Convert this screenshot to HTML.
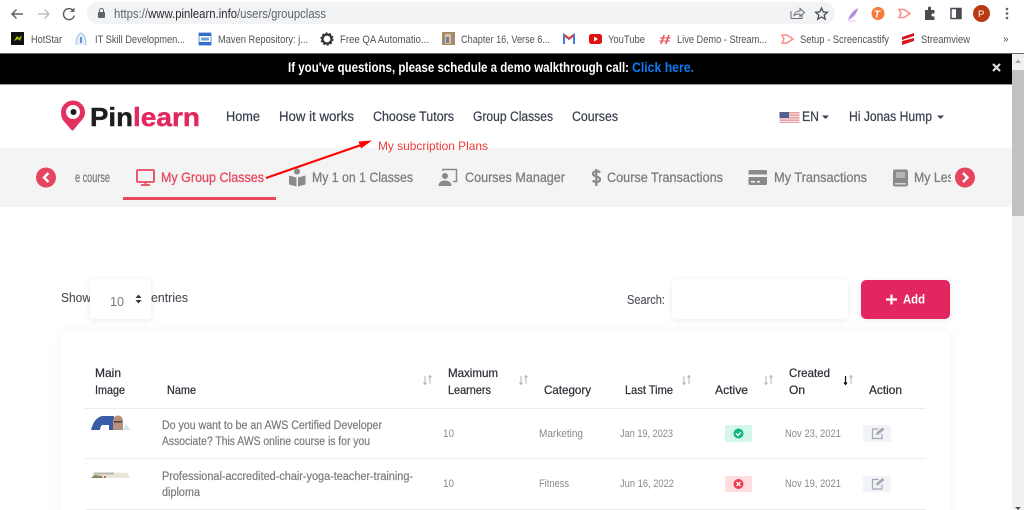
<!DOCTYPE html>
<html><head><meta charset="utf-8"><title>Pinlearn</title>
<style>
html,body{margin:0;padding:0;background:#fff;width:1024px;height:510px;overflow:hidden}
svg{display:block;filter:blur(.35px)}
text{font-family:"Liberation Sans",sans-serif}
.bm{font-size:11px;fill:#4f5257}
.nav{font-size:13.5px;fill:#3b4050;stroke:#3b4050;stroke-width:.22px}
.tab{font-size:14px;fill:#7d7d7d;stroke:#7d7d7d;stroke-width:.28px}
.th{font-size:12px;fill:#2e3138;stroke:#2e3138;stroke-width:.25px}
.td{font-size:11px;fill:#8a8a8a}
.tn{font-size:11.5px;fill:#7c7c7c;stroke:#7c7c7c;stroke-width:.22px}
.lb{font-size:13px;fill:#4a4d55;stroke:#4a4d55;stroke-width:.12px}
</style></head><body>
<svg width="1024" height="510" viewBox="0 0 1024 510" xmlns="http://www.w3.org/2000/svg">
<defs>
<filter id="sh" x="-20%" y="-20%" width="140%" height="150%"><feDropShadow dx="0" dy="1" stdDeviation="3" flood-color="#000" flood-opacity=".09"/></filter>
<filter id="sh2" x="-5%" y="-5%" width="110%" height="110%"><feDropShadow dx="0" dy="0" stdDeviation="5" flood-color="#000" flood-opacity=".05"/></filter>
<clipPath id="r"><rect x="900" y="165" width="51" height="25"/></clipPath>
</defs>

<!-- browser toolbar -->
<rect width="1024" height="54" fill="#fff"/>
<rect x="87" y="2" width="748" height="22" rx="11" fill="#f1f3f4"/>
<path d="M23 14H12M16.500 9.500L12 14l4.500 4.500" fill="none" stroke="#5f6368" stroke-width="1.500"/>
<path d="M49 14H38M44.500 9.500L49 14l-4.500 4.500" fill="none" stroke="#bdc1c6" stroke-width="1.500"/>
<path d="M73.500 11a5.500 5.500 0 1 0 .8 4.500" fill="none" stroke="#5f6368" stroke-width="1.500"/><path d="M74.500 7.500v4.500h-4.500z" fill="#5f6368"/>
<rect x="98" y="12" width="7" height="6" rx="1" fill="#5f6368"/><path d="M99.500 12v-1.500a2 2 0 0 1 4 0V12" fill="none" stroke="#5f6368" stroke-width="1"/>
<text x="114" y="18" font-size="12.500" fill="#5f6368" textLength="212" lengthAdjust="spacingAndGlyphs">https://<tspan fill="#2a2c30">www.pinlearn.info</tspan>/users/groupclass</text>
<path d="M791 11v7.500h11V15M794 15.500c.5-3 3-4.500 6-4.500V8.500l4.500 4-4.500 4V14c-2.500 0-4.500.3-6 1.500z" fill="none" stroke="#6a6d72" stroke-width="1"/>
<path d="M821.500 8l1.700 3.900 4.200.4-3.200 2.800 1 4.100-3.700-2.200-3.700 2.200 1-4.100-3.200-2.800 4.200-.4z" fill="none" stroke="#4a4d52" stroke-width="1.300"/>
<path d="M848 20c2-6 5-9 10-12-1 5-4 9-8 11z" fill="#b48ae0"/><path d="M848 21h8" stroke="#d9c6ef" stroke-width="1"/>
<circle cx="878" cy="13.500" r="6.500" fill="#f47b3a"/><text x="874" y="17.500" font-size="10" font-weight="bold" font-style="italic" fill="#fff">T</text>
<path d="M899 9.500h5l6 4-6 4h-5l2-4z" fill="none" stroke="#f88" stroke-width="1.500"/>
<path d="M925 10h3v-2a1.500 1.500 0 0 1 3 0v2h3.500v3.500h-1.500a1.500 1.500 0 0 0 0 3h1.500V20H925z" fill="#4a4d52"/>
<rect x="951" y="8.500" width="10" height="10" fill="none" stroke="#4a4d52" stroke-width="1.500"/><rect x="956" y="8.500" width="5" height="10" fill="#4a4d52"/>
<circle cx="981.500" cy="13.500" r="8.500" fill="#b93a10"/><text x="978" y="17" font-size="9.500" fill="#fff">P</text>
<circle cx="1007" cy="9" r="1.300" fill="#5f6368"/><circle cx="1007" cy="13.500" r="1.300" fill="#5f6368"/><circle cx="1007" cy="18" r="1.300" fill="#5f6368"/>

<!-- bookmarks -->
<rect x="11" y="32" width="13" height="13" fill="#111"/><path d="M14 41l3-5 2 2 3-3-2 6-2-2z" fill="#9c0"/>
<text class="bm" x="31" y="43" textLength="31" lengthAdjust="spacingAndGlyphs">HotStar</text>
<path d="M76 45c0-6 2-11 5-12 3 1 5 6 5 12" fill="#e6eff9" stroke="#9cc0e6" stroke-width="1"/><path d="M81 37v6" stroke="#3a6fc0" stroke-width="1.500"/>
<text class="bm" x="95" y="43" textLength="90" lengthAdjust="spacingAndGlyphs">IT Skill Developmen...</text>
<rect x="199" y="33" width="12" height="12" fill="#fff" stroke="#3f78c9" stroke-width=".8"/><rect x="199" y="33" width="12" height="3" fill="#2f6fc9"/><rect x="199" y="42" width="12" height="3" fill="#2f6fc9"/><rect x="201" y="37.500" width="8" height="3" fill="#6fa0de"/>
<text class="bm" x="218" y="43" textLength="90" lengthAdjust="spacingAndGlyphs">Maven Repository: j...</text>
<circle cx="327" cy="39" r="4.500" fill="none" stroke="#333" stroke-width="2.200"/><circle cx="327" cy="39" r="6" fill="none" stroke="#333" stroke-width="1.200" stroke-dasharray="2 1.800"/>
<text class="bm" x="340" y="43" textLength="89" lengthAdjust="spacingAndGlyphs">Free QA Automatio...</text>
<rect x="442" y="32" width="13" height="13" fill="#a58a6c"/><rect x="445" y="34" width="6" height="10" fill="#d9c2a0"/><rect x="446" y="37" width="3" height="6" fill="#6f7fa8"/>
<text class="bm" x="461" y="43" textLength="89" lengthAdjust="spacingAndGlyphs">Chapter 16, Verse 6...</text>
<path d="M564 44v-9l5 4 5-4v9" fill="none" stroke="#3c7ce0" stroke-width="2"/><path d="M564.500 35l4.500 3.500 4.500-3.500" fill="none" stroke="#e04030" stroke-width="2"/>
<rect x="589" y="34" width="13" height="10" rx="2.500" fill="#e01010"/><path d="M594 36.500v5l4-2.500z" fill="#fff"/>
<text class="bm" x="608" y="43" textLength="37" lengthAdjust="spacingAndGlyphs">YouTube</text>
<text x="659" y="44" font-size="13" font-weight="bold" fill="#e8505a" textLength="12" lengthAdjust="spacingAndGlyphs">#</text>
<text class="bm" x="677" y="43" textLength="90" lengthAdjust="spacingAndGlyphs">Live Demo - Stream...</text>
<path d="M782 35h5l6 4-6 4h-5l2-4z" fill="none" stroke="#f88" stroke-width="1.400"/>
<text class="bm" x="800" y="43" textLength="89" lengthAdjust="spacingAndGlyphs">Setup - Screencastify</text>
<path d="M902 37l12-4v3l-12 4zM902 41l12-3v3l-12 4z" fill="#d8141c"/>
<text class="bm" x="921" y="43" textLength="49" lengthAdjust="spacingAndGlyphs">Streamview</text>
<text x="1003" y="42" font-size="10" fill="#4a4d52">»</text>
<rect y="53" width="1024" height="1.500" fill="#666"/>

<!-- page -->
<rect y="54" width="1012" height="30" fill="#000"/>
<rect y="84" width="1012" height="1" fill="#999"/>
<text x="288" y="72" font-size="14" font-weight="bold" fill="#fff" textLength="341" lengthAdjust="spacingAndGlyphs">If you've questions, please schedule a demo walkthrough call:</text>
<text x="632" y="72" font-size="14" font-weight="bold" fill="#0d7bf2" textLength="62" lengthAdjust="spacingAndGlyphs">Click here.</text>
<path d="M993 64l7 7M1000 64l-7 7" stroke="#ddd" stroke-width="2.200"/>

<!-- logo -->
<path d="M73 100.500a12 12 0 0 1 12 12c0 4-2 6.500-4.500 9L73.500 130c-1 .8-1.500.5-2.300-.2L65 122.500c-2.500-2.500-4-5.500-4-10a12 12 0 0 1 12-12z" fill="#e3305f"/>
<circle cx="73" cy="112" r="7" fill="#fff"/><circle cx="73.500" cy="112" r="3" fill="#1a1a1a"/>
<text x="90" y="126" font-size="26" font-weight="bold" fill="#1e1e1e" stroke="#1e1e1e" stroke-width=".4" textLength="43" lengthAdjust="spacingAndGlyphs">Pin</text>
<text x="133" y="126" font-size="26" font-weight="bold" fill="#e2285f" stroke="#e2285f" stroke-width=".4" textLength="67" lengthAdjust="spacingAndGlyphs">learn</text>

<!-- nav -->
<text class="nav" x="226" y="121" textLength="34" lengthAdjust="spacingAndGlyphs">Home</text>
<text class="nav" x="279" y="121" textLength="75" lengthAdjust="spacingAndGlyphs">How it works</text>
<text class="nav" x="373" y="121" textLength="81" lengthAdjust="spacingAndGlyphs">Choose Tutors</text>
<text class="nav" x="473" y="121" textLength="80" lengthAdjust="spacingAndGlyphs">Group Classes</text>
<text class="nav" x="572" y="121" textLength="46" lengthAdjust="spacingAndGlyphs">Courses</text>
<rect x="779.500" y="112" width="20" height="11" fill="#e8a0a6"/><path d="M779.500 114h20M779.500 116.500h20M779.500 119h20M779.500 121.500h20" stroke="#f7e4e6" stroke-width=".9"/><rect x="779.500" y="112" width="9.500" height="6" fill="#52628f"/>
<text class="nav" x="802" y="121" textLength="17" lengthAdjust="spacingAndGlyphs">EN</text>
<path d="M822 115.500h7l-3.500 3.500z" fill="#3b4050"/>
<text class="nav" x="849" y="121" textLength="83" lengthAdjust="spacingAndGlyphs">Hi Jonas Hump</text>
<path d="M937 115.500h7l-3.500 3.500z" fill="#3b4050"/>

<!-- tabs -->
<rect y="148" width="1012" height="59" fill="#f4f4f4"/>
<text class="tab" x="75" y="182" textLength="35" lengthAdjust="spacingAndGlyphs">e course</text>
<circle cx="46" cy="177.500" r="10" fill="#e6455f"/><path d="M48.500 173l-4.500 4.500 4.500 4.500" fill="none" stroke="#fff" stroke-width="2.400"/>

<rect x="137" y="170" width="17" height="12" rx="1" fill="none" stroke="#e6485f" stroke-width="1.800"/><path d="M145.500 182v2.500M141 185h9" stroke="#e6485f" stroke-width="1.800"/>
<text class="tab" x="161" y="182" style="fill:#e6485f;stroke:#e6485f" textLength="103" lengthAdjust="spacingAndGlyphs">My Group Classes</text>
<rect x="123" y="197" width="153" height="3" fill="#e6485f"/>

<circle cx="297" cy="171.500" r="3" fill="#8a8a8a"/><path d="M289 175.500l7.500 2v9l-7.500-2zM298 177.500l7.500-2v9l-7.500 2z" fill="#8a8a8a"/>
<text class="tab" x="312" y="182" textLength="101" lengthAdjust="spacingAndGlyphs">My 1 on 1 Classes</text>
<circle cx="445" cy="176" r="3" fill="#8a8a8a"/><path d="M438.500 186c0-3.500 2.500-5.500 6.500-5.500s6.500 2 6.500 5.500z" fill="#8a8a8a"/><path d="M443 171v-1.500h13.500v12H453" fill="none" stroke="#8a8a8a" stroke-width="1.500"/>
<text class="tab" x="465" y="182" textLength="100" lengthAdjust="spacingAndGlyphs">Courses Manager</text>
<path d="M600 172.500c-1.500-1.800-7-1.800-7 1.200 0 3.300 7 2.300 7 5.800 0 3-5.500 3-7.300 1M596.300 169v17" fill="none" stroke="#8a8a8a" stroke-width="2.200"/>
<text class="tab" x="607" y="182" textLength="116" lengthAdjust="spacingAndGlyphs">Course Transactions</text>
<rect x="748.500" y="170" width="18.500" height="15" rx="1.500" fill="#8a8a8a"/><rect x="748.500" y="174.500" width="18.500" height="2.500" fill="#f4f4f4"/><rect x="751" y="181" width="4" height="1.500" fill="#f4f4f4"/><rect x="757" y="181" width="3" height="1.500" fill="#f4f4f4"/>
<text class="tab" x="774" y="182" textLength="93" lengthAdjust="spacingAndGlyphs">My Transactions</text>
<rect x="893" y="169.500" width="15" height="17" rx="2" fill="#8a8a8a"/><rect x="896" y="172" width="9" height="6" fill="#b5b5b5"/><rect x="895" y="183" width="11" height="1.500" fill="#d5d5d5"/>
<g clip-path="url(#r)"><text class="tab" x="914" y="182" textLength="66" lengthAdjust="spacingAndGlyphs">My Lessons</text></g>
<circle cx="965" cy="177.500" r="10" fill="#e6455f"/><path d="M963 173l4.500 4.500-4.500 4.500" fill="none" stroke="#fff" stroke-width="2.400"/>

<!-- annotation -->
<path d="M266 178L364 144" stroke="#f00" stroke-width="2.100" fill="none"/><path d="M372 140.500l-13.500 1 2.500 7z" fill="#f00"/>
<text x="378" y="150" font-size="12" fill="#f03a3a" textLength="110" lengthAdjust="spacingAndGlyphs">My subcription Plans</text>

<!-- controls -->
<text class="lb" x="61" y="302" textLength="30" lengthAdjust="spacingAndGlyphs">Show</text>
<text class="lb" x="151" y="302" textLength="37" lengthAdjust="spacingAndGlyphs">entries</text>
<rect x="90" y="279" width="61" height="40" rx="4" fill="#fff" filter="url(#sh)"/>
<text x="110" y="306" font-size="13" fill="#7d7d7d" textLength="14" lengthAdjust="spacingAndGlyphs">10</text>
<path d="M135.500 298l3-3.500 3 3.500zM135.500 300l3 3.500 3-3.500z" fill="#333"/>
<text class="lb" x="627" y="304" textLength="38" lengthAdjust="spacingAndGlyphs">Search:</text>
<rect x="672" y="279" width="176" height="40" rx="6" fill="#fff" filter="url(#sh)"/>
<rect x="861" y="280" width="89" height="39" rx="5" fill="#e2265e" filter="url(#sh)"/>
<path d="M891.500 294.500v10M886 299.500h11" stroke="#fff" stroke-width="2.200"/>
<text x="903" y="303.500" font-size="13" font-weight="bold" fill="#fff" textLength="22" lengthAdjust="spacingAndGlyphs">Add</text>

<!-- card -->
<rect x="61" y="331" width="889" height="200" rx="6" fill="#fff" filter="url(#sh2)"/>
<text class="th" x="95" y="377" textLength="26" lengthAdjust="spacingAndGlyphs">Main</text>
<text class="th" x="95" y="394" textLength="30" lengthAdjust="spacingAndGlyphs">Image</text>
<text class="th" x="167" y="394" textLength="29" lengthAdjust="spacingAndGlyphs">Name</text>
<text class="th" x="448" y="377" textLength="50" lengthAdjust="spacingAndGlyphs">Maximum</text>
<text class="th" x="448" y="394" textLength="43" lengthAdjust="spacingAndGlyphs">Learners</text>
<text class="th" x="544" y="394" textLength="47" lengthAdjust="spacingAndGlyphs">Category</text>
<text class="th" x="625" y="394" textLength="48" lengthAdjust="spacingAndGlyphs">Last Time</text>
<text class="th" x="715" y="394" textLength="33" lengthAdjust="spacingAndGlyphs">Active</text>
<text class="th" x="789" y="377" textLength="41" lengthAdjust="spacingAndGlyphs">Created</text>
<text class="th" x="789" y="394" textLength="16" lengthAdjust="spacingAndGlyphs">On</text>
<text class="th" x="869" y="394" textLength="33" lengthAdjust="spacingAndGlyphs">Action</text>
<g fill="none" stroke="#b5b5b5" stroke-width="1">
<path d="M425 376v8M423.500 382.500l1.500 2 1.500-2M430 384v-8M428.500 377.500l1.500-2 1.500 2"/>
<path d="M521 376v8M519.500 382.500l1.500 2 1.500-2M526 384v-8M524.500 377.500l1.500-2 1.500 2"/>
<path d="M684 376v8M682.500 382.500l1.500 2 1.500-2M689 384v-8M687.500 377.500l1.500-2 1.500 2"/>
<path d="M766 376v8M764.500 382.500l1.500 2 1.500-2M771 384v-8M769.500 377.500l1.500-2 1.500 2"/>
<path d="M851 384v-8M849.500 377.500l1.500-2 1.500 2"/>
</g>
<path d="M845.500 376v8M844 382.500l1.500 2 1.500-2" fill="none" stroke="#111" stroke-width="1.200"/>
<rect x="85" y="408" width="841" height="1" fill="#ececec"/>
<rect x="85" y="458" width="841" height="1" fill="#ececec"/>
<rect x="85" y="509" width="841" height="1" fill="#ececec"/>

<!-- row 1 -->
<path d="M91 430c1.500-6 4-12 11-14h12v14h-5v-5h-6c-2 0-2.500 2-3 5z" fill="#3a5ca8"/>
<path d="M113 430v-9c0-3 2-5.500 5-5.500s5 2.500 5 5.500v9z" fill="#b99078"/><rect x="114" y="421" width="8" height="1.500" fill="#444"/>
<path d="M123 430l3-6 4.500 6z" fill="#cfe8f4"/>
<text class="tn" x="162" y="429" textLength="220" lengthAdjust="spacingAndGlyphs">Do you want to be an AWS Certified Developer</text>
<text class="tn" x="162" y="445" textLength="208" lengthAdjust="spacingAndGlyphs">Associate? This AWS online course is for you</text>
<text class="td" x="443" y="437" textLength="11" lengthAdjust="spacingAndGlyphs">10</text>
<text class="td" x="539" y="437" textLength="44" lengthAdjust="spacingAndGlyphs">Marketing</text>
<text class="td" x="620" y="437" textLength="53" lengthAdjust="spacingAndGlyphs">Jan 19, 2023</text>
<rect x="725" y="425" width="27" height="17" rx="2" fill="#d3f7e8"/>
<circle cx="738.500" cy="433.500" r="5" fill="#12b57e"/><path d="M736 433.500l2 2 3-3.500" fill="none" stroke="#fff" stroke-width="1.300"/>
<text class="td" x="785" y="437" textLength="56" lengthAdjust="spacingAndGlyphs">Nov 23, 2021</text>
<rect x="863" y="425" width="28" height="17" rx="2" fill="#f1f3f8"/>
<path d="M882 434v4.500h-9.500V429h6" fill="none" stroke="#a5a8ae" stroke-width="1.200"/><path d="M876 435l.5-2.500 6-5 2 2-6 5z" fill="#a5a8ae"/>

<!-- row 2 -->
<path d="M91 478l3-5.500h33l3 5.500z" fill="#e9e5da"/><path d="M94 472.500h20v2H93z" fill="#b9b9ac"/><path d="M91 478l4-3 7 1 1 2z" fill="#7f8a60"/><rect x="104" y="476" width="2" height="2" fill="#c8702a"/>
<text class="tn" x="162" y="480" textLength="251" lengthAdjust="spacingAndGlyphs">Professional-accredited-chair-yoga-teacher-training-</text>
<text class="tn" x="162" y="496" textLength="38" lengthAdjust="spacingAndGlyphs">diploma</text>
<text class="td" x="443" y="487" textLength="11" lengthAdjust="spacingAndGlyphs">10</text>
<text class="td" x="539" y="487" textLength="30" lengthAdjust="spacingAndGlyphs">Fitness</text>
<text class="td" x="620" y="487" textLength="54" lengthAdjust="spacingAndGlyphs">Jun 16, 2022</text>
<rect x="725" y="476" width="27" height="16" rx="2" fill="#ffdde1"/>
<circle cx="738.500" cy="484" r="5" fill="#ee3a52"/><path d="M736.500 482l4 4M740.500 482l-4 4" stroke="#fff" stroke-width="1.300"/>
<text class="td" x="785" y="487" textLength="56" lengthAdjust="spacingAndGlyphs">Nov 19, 2021</text>
<rect x="863" y="476" width="28" height="16" rx="2" fill="#f1f3f8"/>
<path d="M882 484.500v4.500h-9.500v-9.500h6" fill="none" stroke="#a5a8ae" stroke-width="1.200"/><path d="M876 485.500l.5-2.500 6-5 2 2-6 5z" fill="#a5a8ae"/>

<!-- scrollbar -->
<rect x="1012" y="54" width="12" height="456" fill="#f1f1f1"/>
<rect x="1012" y="70" width="12" height="146" fill="#c1c1c1"/>
<path d="M1015 63l3-3.500 3 3.500z" fill="#a3a3a3"/>
<path d="M1015 507l3 3 3-3z" fill="#505050"/>
</svg>
</body></html>
